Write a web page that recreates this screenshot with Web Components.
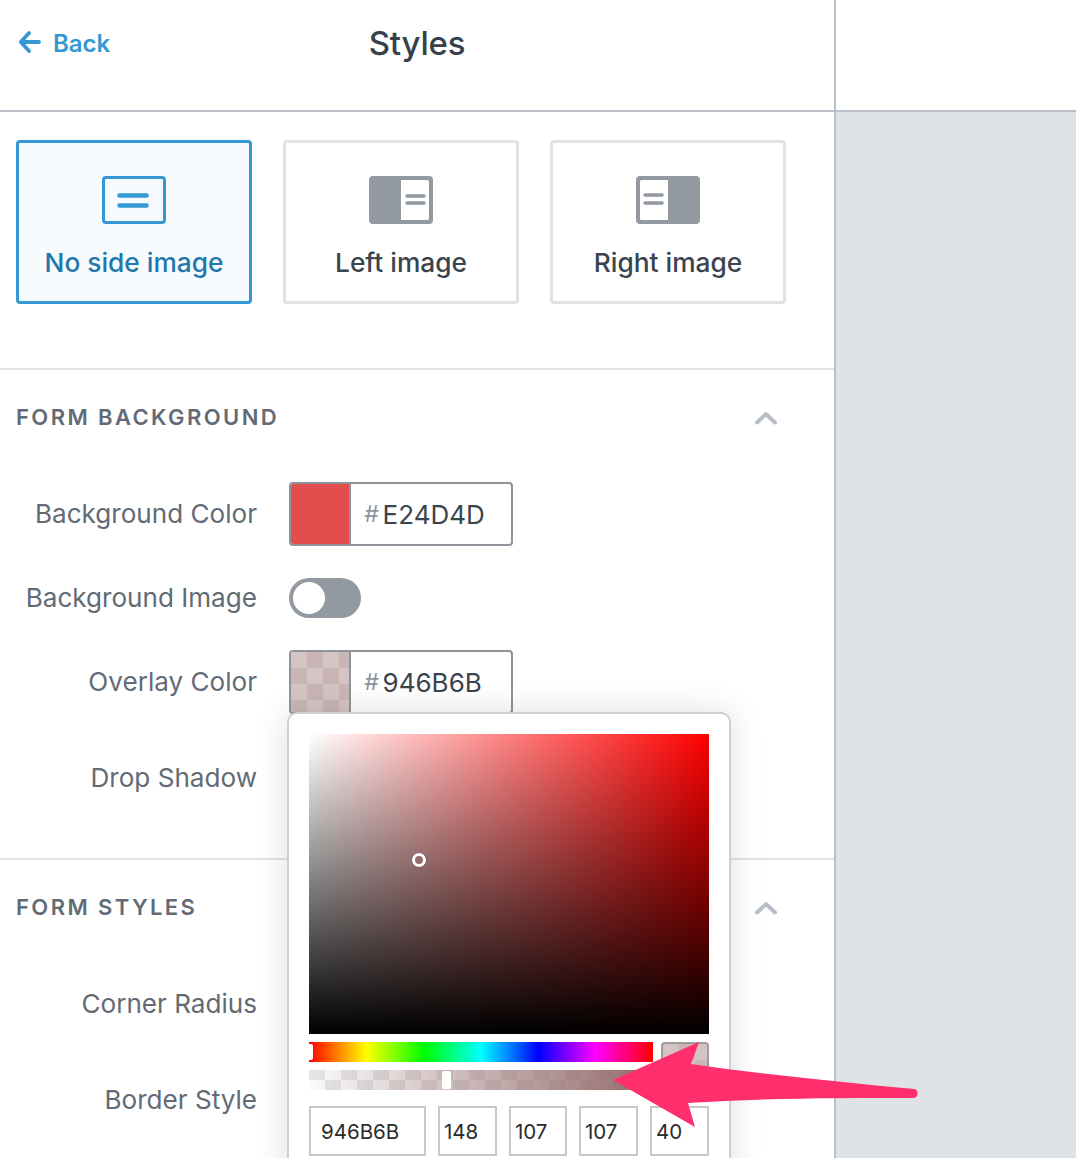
<!DOCTYPE html>
<html lang="en">
<head>
<meta charset="utf-8">
<title>Styles</title>
<style>
html, body { margin: 0; height: 1158px; overflow: hidden; background: #fff; }
body { font-family: Inter, Lato, sans-serif; color: #3a444e; }
</style>
</head>
<body>
<style-editor>
  <top-bar>Styles</top-bar>
  <layout-picker>
    <layout-card kind="none" active>No side image</layout-card>
    <layout-card kind="left">Left image</layout-card>
    <layout-card kind="right">Right image</layout-card>
  </layout-picker>
  <form-section heading="FORM BACKGROUND">
    <form-row label="Background Color"><color-input value="E24D4D" color="#e24d4d"></color-input></form-row>
    <form-row label="Background Image"><toggle-switch></toggle-switch></form-row>
    <form-row label="Overlay Color">
      <color-input value="946B6B" checker>
        <color-picker slot="popover"></color-picker>
      </color-input>
    </form-row>
    <form-row label="Drop Shadow" wide></form-row>
  </form-section>
  <form-section heading="FORM STYLES">
    <form-row label="Corner Radius"></form-row>
    <form-row label="Border Style" wide></form-row>
  </form-section>
  <annotation-arrow></annotation-arrow>
</style-editor>

<script>
class StyleEditor extends HTMLElement {
    constructor() {
        super();
        this.attachShadow({mode: "open"}).innerHTML = `
        <style>
            :host { display: grid; grid-template-columns: 836px 240px; height: 1158px; position: relative; overflow: hidden; }
            .side { border-right: 2px solid #b8bfc7; background: #fff; min-width: 0; }
            .canvas { background: #dfe3e6; }
            .canvas div { height: 110px; background: #fff; border-bottom: 2px solid #b8bfc7; }
        </style>
        <div class="side"><slot></slot></div>
        <div class="canvas"><div></div></div>
        <slot name="overlay"></slot>`;
    }
}
customElements.define("style-editor", StyleEditor);

class TopBar extends HTMLElement {
    constructor() {
        super();
        this.attachShadow({mode: "open"}).innerHTML = `
        <style>
            :host { display: grid; grid-template-columns: 1fr auto 1fr; height: 110px; box-sizing: content-box; border-bottom: 2px solid #b8bfc7; }
            .back { display: flex; align-items: center; gap: 11px; height: 86px; padding-left: 18px; color: #3498d4; font-size: 24px; font-weight: 600; }
            svg { width: 24px; height: 24px; display: block; margin-top: -3px; }
            h1 { margin: 0; height: 86px; line-height: 86px; font-size: 33px; font-weight: 500; letter-spacing: -.2px; color: #36414c; }
        </style>
        <div class="back">
            <svg viewBox="0 0 24 24" fill="none" stroke="#3498d4" stroke-width="3.800" stroke-linecap="round" stroke-linejoin="round"><path d="M11 3 2.800 12 11 21M3.500 12H21"/></svg>
            <span>Back</span>
        </div>
        <h1><slot></slot></h1>
        <div></div>`;
    }
}
customElements.define("top-bar", TopBar);

class LayoutPicker extends HTMLElement {
    constructor() {
        super();
        this.attachShadow({mode: "open"}).innerHTML = `
        <style>
            :host { display: grid; grid-template-columns: repeat(3, 236px); gap: 31px; padding: 28px 16px 64px; border-bottom: 2px solid #dfe3e6; }
        </style>
        <slot></slot>`;
    }
}
customElements.define("layout-picker", LayoutPicker);

const LAYOUT_ICONS = {
    none: `<rect x="1.500" y="1.500" width="61" height="45" rx="2.500" fill="none" stroke="#3498d4" stroke-width="3"/>
           <path d="M17.500 19.500h27M17.500 29.500h27" stroke="#3498d4" stroke-width="4.500" stroke-linecap="round"/>`,
    left: `<rect width="64" height="48" rx="4" fill="#9399a1"/>
           <path d="M32 4h26.500a1.500 1.500 0 0 1 1.500 1.500v37a1.500 1.500 0 0 1-1.500 1.500H32z" fill="#fff"/>
           <path d="M38 20h17M38 27h17" stroke="#9399a1" stroke-width="3.500" stroke-linecap="round"/>`,
    right: `<rect width="64" height="48" rx="4" fill="#9399a1"/>
           <path d="M32 4H5.500A1.500 1.500 0 0 0 4 5.500v37A1.500 1.500 0 0 0 5.500 44H32z" fill="#fff"/>
           <path d="M9 19h17M9 27h17" stroke="#9399a1" stroke-width="3.500" stroke-linecap="round"/>`
};

class LayoutCard extends HTMLElement {
    constructor() {
        super();
        this.attachShadow({mode: "open"}).innerHTML = `
        <style>
            :host { display: flex; flex-direction: column; align-items: center; box-sizing: border-box; height: 164px; padding-top: 33px; border: 3px solid #dfe3e6; border-radius: 4px; background: #fff; font-size: 26.300px; font-weight: 500; color: #3a444e; }
            :host([active]) { border-color: #3498d4; background: #f7fbfe; color: #1f78ad; }
            svg { width: 64px; height: 48px; display: block; margin-bottom: 21px; }
            span { line-height: 36px; }
        </style>
        <svg viewBox="0 0 64 48"></svg>
        <span><slot></slot></span>`;
    }
    connectedCallback() {
        this.shadowRoot.querySelector("svg").innerHTML = LAYOUT_ICONS[this.getAttribute("kind")];
    }
}
customElements.define("layout-card", LayoutCard);

class FormSection extends HTMLElement {
    constructor() {
        super();
        this.attachShadow({mode: "open"}).innerHTML = `
        <style>
            :host { display: block; padding-bottom: 48px; border-bottom: 2px solid #dfe3e6; }
            header { display: flex; align-items: center; justify-content: space-between; height: 94px; margin-bottom: 18px; padding: 0 56px 0 16px; }
            h2 { margin: 0; font-size: 22px; font-weight: 600; letter-spacing: 2.400px; color: #626b75; }
            svg { width: 24px; height: 14px; display: block; margin-top: 2px; }
            .rows { display: flex; flex-direction: column; gap: 20px; }
        </style>
        <header>
            <h2></h2>
            <svg viewBox="0 0 24 14" fill="none" stroke="#b8bec6" stroke-width="4" stroke-linecap="round" stroke-linejoin="round"><path d="M3 11.500 12 3l9 8.500"/></svg>
        </header>
        <div class="rows"><slot></slot></div>`;
    }
    connectedCallback() {
        this.shadowRoot.querySelector("h2").textContent = this.getAttribute("heading");
    }
}
customElements.define("form-section", FormSection);

class FormRow extends HTMLElement {
    constructor() {
        super();
        this.attachShadow({mode: "open"}).innerHTML = `
        <style>
            :host { display: flex; align-items: center; gap: 32px; min-height: 64px; }
            :host([wide]) { margin-top: 12px; }
            label { width: 257px; flex: none; padding-bottom: 2px; text-align: right; white-space: nowrap; font-size: 26.100px; color: #626b75; }
        </style>
        <label></label>
        <slot></slot>`;
    }
    connectedCallback() {
        this.shadowRoot.querySelector("label").textContent = this.getAttribute("label");
    }
}
customElements.define("form-row", FormRow);

const CHECKER = "repeating-conic-gradient(#c9b5b5 0 25%, #d5c4c4 0 50%) 0 0 / 32px 32px";

class ColorInput extends HTMLElement {
    constructor() {
        super();
        this.attachShadow({mode: "open"}).innerHTML = `
        <style>
            :host { display: flex; position: relative; box-sizing: border-box; width: 224px; height: 64px; border: 2px solid #8f949c; border-radius: 4px; background: #fff; }
            .swatch { width: 58px; flex: none; border-right: 2px solid #8f949c; border-radius: 2px 0 0 2px; }
            .value { display: flex; align-items: center; padding-left: 13px; font-size: 26px; color: #3a444e; }
            .hash { font-size: 23px; color: #8f949c; margin-right: 4px; font-style: italic; }
        </style>
        <div class="swatch"></div>
        <div class="value"><span class="hash">#</span><span class="text"></span></div>
        <slot name="popover"></slot>`;
    }
    connectedCallback() {
        this.shadowRoot.querySelector(".text").textContent = this.getAttribute("value");
        this.shadowRoot.querySelector(".swatch").style.background =
            this.hasAttribute("checker") ? CHECKER : this.getAttribute("color");
    }
}
customElements.define("color-input", ColorInput);

class ToggleSwitch extends HTMLElement {
    constructor() {
        super();
        this.attachShadow({mode: "open"}).innerHTML = `
        <style>
            :host { display: block; box-sizing: border-box; width: 72px; height: 40px; padding: 4px; border-radius: 20px; background: #9399a1; }
            div { width: 32px; height: 32px; border-radius: 50%; background: #fff; }
        </style>
        <div></div>`;
    }
}
customElements.define("toggle-switch", ToggleSwitch);

class ColorPicker extends HTMLElement {
    constructor() {
        super();
        this.attachShadow({mode: "open"}).innerHTML = `
        <style>
            :host { display: block; position: absolute; left: -4px; top: 60px; z-index: 2; box-sizing: border-box; width: 444px; height: 520px; padding: 20px; border: 2px solid #ccd0d5; border-radius: 10px; background: #fff; box-shadow: 0 0 34px rgba(0,0,0,.13); }
            .sv { position: relative; width: 400px; height: 300px; background: linear-gradient(to top, #000, rgba(0,0,0,0)), linear-gradient(to right, #fff, #f00); }
            .cursor { position: absolute; left: 103px; top: 119px; box-sizing: border-box; width: 14px; height: 14px; border: 3px solid #fff; border-radius: 50%; box-shadow: 0 0 1px rgba(0,0,0,.6); }
            .sliders { display: grid; grid-template-columns: 344px 48px; column-gap: 8px; row-gap: 8px; margin-top: 8px; }
            .hue, .alpha { position: relative; height: 20px; }
            .hue { background: linear-gradient(to right, #f00, #ff0 16.670%, #0f0 33.330%, #0ff 50%, #00f 66.670%, #f0f 83.330%, #f00); }
            .hue i { position: absolute; left: 0; top: 2px; width: 4px; height: 16px; background: #fff; border-radius: 0 2px 2px 0; }
            .alpha { background: linear-gradient(to right, rgba(148,107,107,0), #946b6b), repeating-conic-gradient(#fbfbfb 0 25%, #e6e6e6 0 50%) 0 0 / 32px 20px; }
            .alpha i { position: absolute; left: 133px; top: 1px; width: 9px; height: 18px; background: #fff; border-radius: 2px; }
            .current { grid-column: 2; grid-row: 1 / 3; box-sizing: border-box; border: 2px solid #a39b9b; border-radius: 4px; background: repeating-conic-gradient(#c9b5b5 0 25%, #d5c4c4 0 50%) 0 0 / 32px 32px; }
            .fields { display: grid; grid-template-columns: 117px 59px 58px 59px 59px; column-gap: 12px; margin-top: 16px; }
            .fields div { box-sizing: border-box; height: 50px; line-height: 47px; border: 2px solid #c8c8c8; font-size: 20.500px; color: #2b2b2b; }
            .fields div:first-child { padding-left: 10px; }
            .fields div:not(:first-child) { padding-left: 4px; }
        </style>
        <div class="sv"><div class="cursor"></div></div>
        <div class="sliders">
            <div class="hue"><i></i></div>
            <div class="current"></div>
            <div class="alpha"><i></i></div>
        </div>
        <div class="fields">
            <div>946B6B</div><div>148</div><div>107</div><div>107</div><div>40</div>
        </div>`;
    }
}
customElements.define("color-picker", ColorPicker);

class AnnotationArrow extends HTMLElement {
    constructor() {
        super();
        this.attachShadow({mode: "open"}).innerHTML = `
        <style>
            :host { display: block; position: absolute; left: 0; top: 0; width: 1076px; height: 1158px; z-index: 5; pointer-events: none; }
            svg { display: block; width: 100%; height: 100%; }
        </style>
        <svg viewBox="0 0 1076 1158">
            <path fill="#ff2e6c" d="M613 1080 699 1042 691 1064C760 1074 840 1082 914 1089Q918 1090 917.500 1094 917 1098 913 1098C840 1098 760 1098 688 1103L695 1127Z"/>
        </svg>`;
    }
}
customElements.define("annotation-arrow", AnnotationArrow);
</script>
</body>
</html>
